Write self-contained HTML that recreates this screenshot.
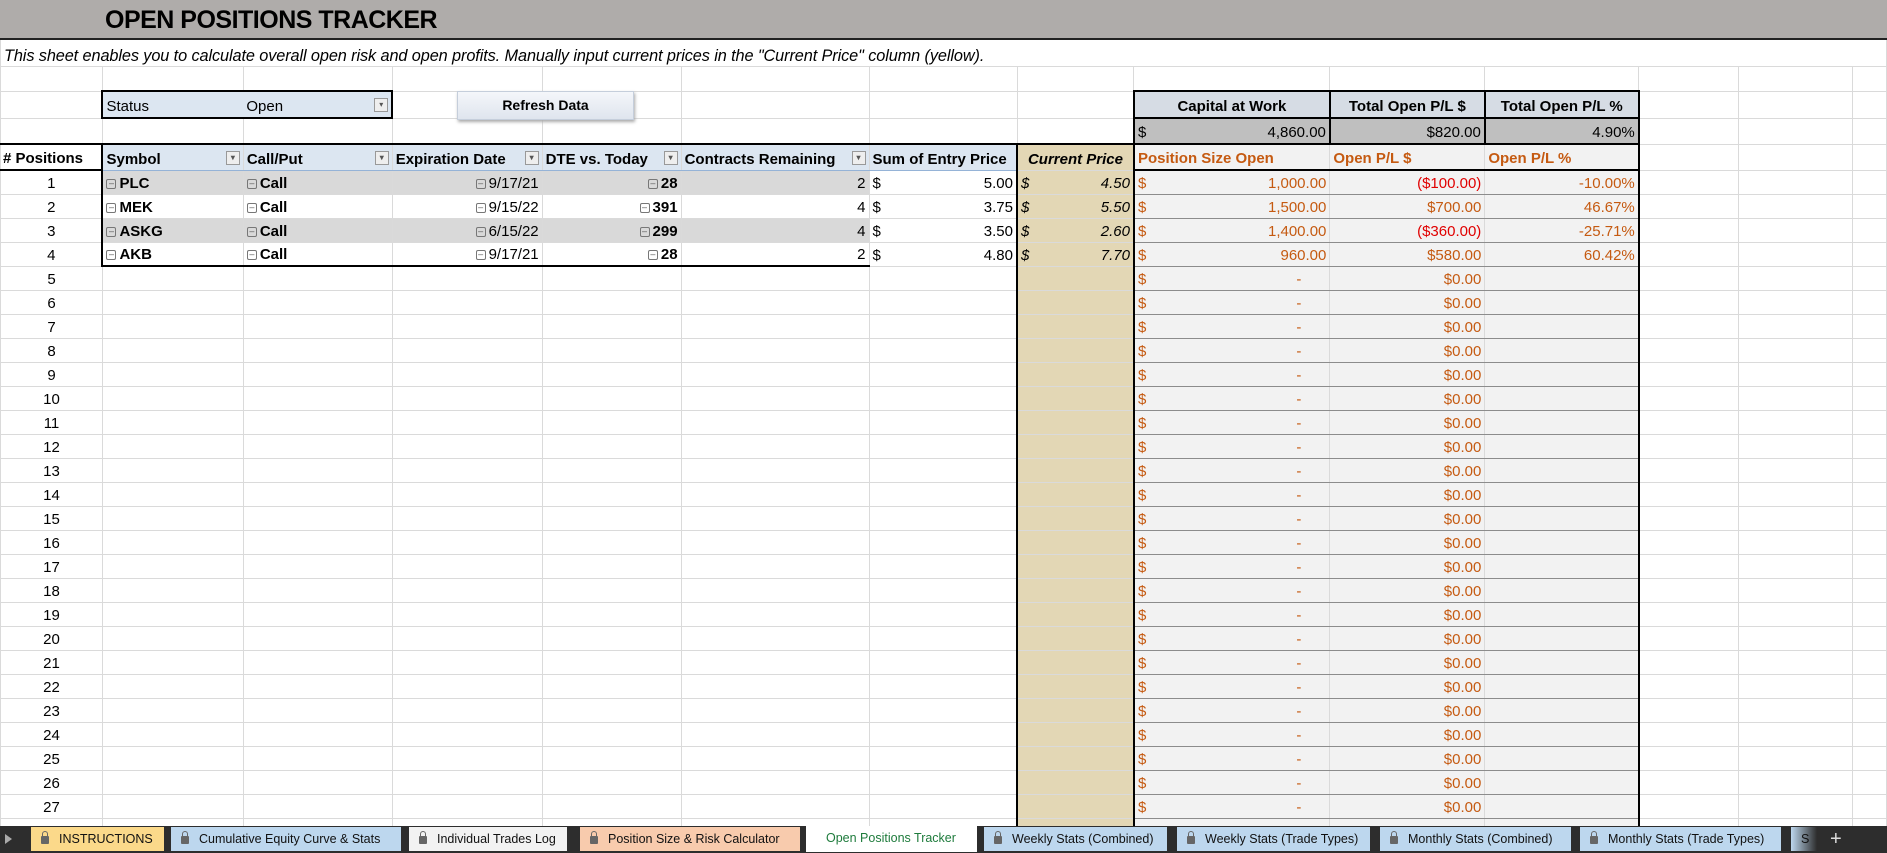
<!DOCTYPE html>
<html><head><meta charset="utf-8"><style>
*{box-sizing:border-box;margin:0;padding:0}
body{width:1887px;height:853px;overflow:hidden;background:#fff;font-family:"Liberation Sans",Arial,sans-serif;font-size:15px;color:#000;position:relative}
table{border-collapse:collapse;table-layout:fixed;position:absolute;left:0;top:0}
td{border:1px solid #dadada;height:24px;padding:0 3px;white-space:nowrap;overflow:hidden;font-size:15px;line-height:20px;vertical-align:bottom}
.c{text-align:center}.r{text-align:right}.b{font-weight:bold}
.hb{background:#dce6f1;font-weight:bold}
.g{background:#d9d9d9}
.tan{background:#e3d7b5;border-left:2px solid #000;border-right:2px solid #000}
.rt{background:#f2f2f2;color:#c55a11;border-bottom:1px solid #8c8c8c}
.rl{border-left:2px solid #000}.rr{border-right:2px solid #000}
.d span{float:left}.d{text-align:right}
.dash{padding-right:28px}
.red{color:#e00000}
.m{display:inline-block;width:10px;height:10px;border:1px solid #777;border-radius:2px;font-size:9px;line-height:7px;text-align:center;color:#555;margin-right:3px;vertical-align:2px;font-weight:normal}
.f{position:absolute;right:3px;top:6px;width:14px;height:14px;border:1px solid #999;background:#eee;font-size:8px;line-height:12px;text-align:center;color:#555}
.tabs{position:absolute;left:0;top:826px;width:1887px;height:27px;background:#2d2d2d}
.tab{position:absolute;top:1px;height:24px;font-size:12.5px;line-height:24px;padding-left:10px;color:#111;white-space:nowrap;overflow:hidden}
.lk{display:inline-block;width:8px;height:8px;background:#666;border-radius:1px;margin-right:10px;position:relative;vertical-align:-1px}
.lk:before{content:"";position:absolute;left:1px;top:-5px;width:4px;height:5px;border:1px solid #666;border-bottom:none;border-radius:3px 3px 0 0}
</style></head><body>
<div style="position:absolute;left:0;top:0;width:1887px;height:40px;background:#afacaa;border-bottom:2px solid #222"></div>
<div style="position:absolute;left:105px;top:6px;font-size:25px;font-weight:bold;letter-spacing:-0.5px">OPEN POSITIONS TRACKER</div>
<table style="top:40px">
<colgroup><col style="width:102px"><col style="width:141px"><col style="width:149px"><col style="width:150px"><col style="width:139px"><col style="width:188px"><col style="width:148px"><col style="width:117px"><col style="width:196px"><col style="width:155px"><col style="width:154px"><col style="width:100px"><col style="width:114px"><col style="width:34px"></colgroup>
<tr style="height:26px"><td colspan="14" style="font-style:italic;font-size:16.3px;border-top:none;letter-spacing:-0.1px">This sheet enables you to calculate overall open risk and open profits. Manually input current prices in the "Current Price" column (yellow).</td></tr>
<tr style="height:25px"><td></td><td></td><td></td><td></td><td></td><td></td><td></td><td></td><td></td><td></td><td></td><td></td><td></td><td></td></tr>
<tr style="height:27px"><td></td><td style="background:#dce6f1;border:2px solid #000;border-right:none">Status</td><td style="background:#dce6f1;border:2px solid #000;border-left:none;position:relative">Open<span class="f">▾</span></td><td></td><td></td><td></td><td></td><td></td>
<td class="c b" style="background:#d6dce4;border:2px solid #000">Capital at Work</td><td class="c b" style="background:#d6dce4;border:2px solid #000">Total Open P/L $</td><td class="c b" style="background:#d6dce4;border:2px solid #000">Total Open P/L %</td><td></td><td></td><td></td></tr>
<tr style="height:26px"><td></td><td></td><td></td><td></td><td></td><td></td><td></td><td></td>
<td class="d" style="background:#bfbfbf;border:2px solid #000"><span>$</span>4,860.00</td><td class="r" style="background:#bfbfbf;border:2px solid #000">$820.00</td><td class="r" style="background:#bfbfbf;border:2px solid #000">4.90%</td><td></td><td></td><td></td></tr>
<tr style="height:26px"><td class="b" style="border-bottom:2px solid #000;border-top:2px solid #000;padding-left:2px">#&nbsp;Positions</td>
<td class="hb" style="position:relative;border-top:2px solid #000;border-left:2px solid #000;border-bottom:1px solid #95b3d7">Symbol<span class="f">▾</span></td>
<td class="hb" style="position:relative;border-top:2px solid #000;border-bottom:1px solid #95b3d7">Call/Put<span class="f">▾</span></td>
<td class="hb" style="position:relative;border-top:2px solid #000;border-bottom:1px solid #95b3d7">Expiration Date<span class="f">▾</span></td>
<td class="hb" style="position:relative;border-top:2px solid #000;border-bottom:1px solid #95b3d7">DTE vs. Today<span class="f">▾</span></td>
<td class="hb" style="position:relative;border-top:2px solid #000;border-bottom:1px solid #95b3d7">Contracts Remaining<span class="f">▾</span></td>
<td class="hb" style="border-top:2px solid #000;border-bottom:1px solid #95b3d7">Sum of Entry Price</td>
<td class="tan c b" style="font-style:italic;border-top:2px solid #000">Current Price</td>
<td class="b rl" style="background:#f2f2f2;color:#c55a11;border-bottom:2px solid #000;border-top:2px solid #000">Position Size Open</td><td class="b" style="background:#f2f2f2;color:#c55a11;border-bottom:2px solid #000;border-top:2px solid #000">Open P/L $</td><td class="b rr" style="background:#f2f2f2;color:#c55a11;border-bottom:2px solid #000;border-top:2px solid #000">Open P/L %</td><td></td><td></td><td></td></tr>
<tr><td class="c">1</td><td class="g b" style="border-left:2px solid #000"><span class="m">–</span>PLC</td><td class="g b"><span class="m">–</span>Call</td><td class="g r"><span class="m">–</span>9/17/21</td><td class="g r b"><span class="m">–</span>28</td><td class="g r">2</td><td class="d"><span>$</span>5.00</td><td class="tan d" style="font-style:italic"><span>$</span>4.50</td><td class="rt d rl"><span>$</span>1,000.00</td><td class="rt r red">($100.00)</td><td class="rt r rr">-10.00%</td><td></td><td></td><td></td></tr>
<tr><td class="c">2</td><td class="b" style="border-left:2px solid #000"><span class="m">–</span>MEK</td><td class="b"><span class="m">–</span>Call</td><td class="r"><span class="m">–</span>9/15/22</td><td class="r b"><span class="m">–</span>391</td><td class="r">4</td><td class="d"><span>$</span>3.75</td><td class="tan d" style="font-style:italic"><span>$</span>5.50</td><td class="rt d rl"><span>$</span>1,500.00</td><td class="rt r">$700.00</td><td class="rt r rr">46.67%</td><td></td><td></td><td></td></tr>
<tr><td class="c">3</td><td class="g b" style="border-left:2px solid #000"><span class="m">–</span>ASKG</td><td class="g b"><span class="m">–</span>Call</td><td class="g r"><span class="m">–</span>6/15/22</td><td class="g r b"><span class="m">–</span>299</td><td class="g r">4</td><td class="d"><span>$</span>3.50</td><td class="tan d" style="font-style:italic"><span>$</span>2.60</td><td class="rt d rl"><span>$</span>1,400.00</td><td class="rt r red">($360.00)</td><td class="rt r rr">-25.71%</td><td></td><td></td><td></td></tr>
<tr><td class="c">4</td><td class="b" style="border-left:2px solid #000;border-bottom:2px solid #000"><span class="m">–</span>AKB</td><td class="b" style="border-bottom:2px solid #000"><span class="m">–</span>Call</td><td class="r" style="border-bottom:2px solid #000"><span class="m">–</span>9/17/21</td><td class="r b" style="border-bottom:2px solid #000"><span class="m">–</span>28</td><td class="r" style="border-bottom:2px solid #000">2</td><td class="d"><span>$</span>4.80</td><td class="tan d" style="font-style:italic"><span>$</span>7.70</td><td class="rt d rl"><span>$</span>960.00</td><td class="rt r">$580.00</td><td class="rt r rr">60.42%</td><td></td><td></td><td></td></tr>
<tr><td class="c">5</td><td></td><td></td><td></td><td></td><td></td><td></td><td class="tan"></td><td class="rt d rl dash"><span>$</span>-</td><td class="rt r">$0.00</td><td class="rt rr"></td><td></td><td></td><td></td></tr>
<tr><td class="c">6</td><td></td><td></td><td></td><td></td><td></td><td></td><td class="tan"></td><td class="rt d rl dash"><span>$</span>-</td><td class="rt r">$0.00</td><td class="rt rr"></td><td></td><td></td><td></td></tr>
<tr><td class="c">7</td><td></td><td></td><td></td><td></td><td></td><td></td><td class="tan"></td><td class="rt d rl dash"><span>$</span>-</td><td class="rt r">$0.00</td><td class="rt rr"></td><td></td><td></td><td></td></tr>
<tr><td class="c">8</td><td></td><td></td><td></td><td></td><td></td><td></td><td class="tan"></td><td class="rt d rl dash"><span>$</span>-</td><td class="rt r">$0.00</td><td class="rt rr"></td><td></td><td></td><td></td></tr>
<tr><td class="c">9</td><td></td><td></td><td></td><td></td><td></td><td></td><td class="tan"></td><td class="rt d rl dash"><span>$</span>-</td><td class="rt r">$0.00</td><td class="rt rr"></td><td></td><td></td><td></td></tr>
<tr><td class="c">10</td><td></td><td></td><td></td><td></td><td></td><td></td><td class="tan"></td><td class="rt d rl dash"><span>$</span>-</td><td class="rt r">$0.00</td><td class="rt rr"></td><td></td><td></td><td></td></tr>
<tr><td class="c">11</td><td></td><td></td><td></td><td></td><td></td><td></td><td class="tan"></td><td class="rt d rl dash"><span>$</span>-</td><td class="rt r">$0.00</td><td class="rt rr"></td><td></td><td></td><td></td></tr>
<tr><td class="c">12</td><td></td><td></td><td></td><td></td><td></td><td></td><td class="tan"></td><td class="rt d rl dash"><span>$</span>-</td><td class="rt r">$0.00</td><td class="rt rr"></td><td></td><td></td><td></td></tr>
<tr><td class="c">13</td><td></td><td></td><td></td><td></td><td></td><td></td><td class="tan"></td><td class="rt d rl dash"><span>$</span>-</td><td class="rt r">$0.00</td><td class="rt rr"></td><td></td><td></td><td></td></tr>
<tr><td class="c">14</td><td></td><td></td><td></td><td></td><td></td><td></td><td class="tan"></td><td class="rt d rl dash"><span>$</span>-</td><td class="rt r">$0.00</td><td class="rt rr"></td><td></td><td></td><td></td></tr>
<tr><td class="c">15</td><td></td><td></td><td></td><td></td><td></td><td></td><td class="tan"></td><td class="rt d rl dash"><span>$</span>-</td><td class="rt r">$0.00</td><td class="rt rr"></td><td></td><td></td><td></td></tr>
<tr><td class="c">16</td><td></td><td></td><td></td><td></td><td></td><td></td><td class="tan"></td><td class="rt d rl dash"><span>$</span>-</td><td class="rt r">$0.00</td><td class="rt rr"></td><td></td><td></td><td></td></tr>
<tr><td class="c">17</td><td></td><td></td><td></td><td></td><td></td><td></td><td class="tan"></td><td class="rt d rl dash"><span>$</span>-</td><td class="rt r">$0.00</td><td class="rt rr"></td><td></td><td></td><td></td></tr>
<tr><td class="c">18</td><td></td><td></td><td></td><td></td><td></td><td></td><td class="tan"></td><td class="rt d rl dash"><span>$</span>-</td><td class="rt r">$0.00</td><td class="rt rr"></td><td></td><td></td><td></td></tr>
<tr><td class="c">19</td><td></td><td></td><td></td><td></td><td></td><td></td><td class="tan"></td><td class="rt d rl dash"><span>$</span>-</td><td class="rt r">$0.00</td><td class="rt rr"></td><td></td><td></td><td></td></tr>
<tr><td class="c">20</td><td></td><td></td><td></td><td></td><td></td><td></td><td class="tan"></td><td class="rt d rl dash"><span>$</span>-</td><td class="rt r">$0.00</td><td class="rt rr"></td><td></td><td></td><td></td></tr>
<tr><td class="c">21</td><td></td><td></td><td></td><td></td><td></td><td></td><td class="tan"></td><td class="rt d rl dash"><span>$</span>-</td><td class="rt r">$0.00</td><td class="rt rr"></td><td></td><td></td><td></td></tr>
<tr><td class="c">22</td><td></td><td></td><td></td><td></td><td></td><td></td><td class="tan"></td><td class="rt d rl dash"><span>$</span>-</td><td class="rt r">$0.00</td><td class="rt rr"></td><td></td><td></td><td></td></tr>
<tr><td class="c">23</td><td></td><td></td><td></td><td></td><td></td><td></td><td class="tan"></td><td class="rt d rl dash"><span>$</span>-</td><td class="rt r">$0.00</td><td class="rt rr"></td><td></td><td></td><td></td></tr>
<tr><td class="c">24</td><td></td><td></td><td></td><td></td><td></td><td></td><td class="tan"></td><td class="rt d rl dash"><span>$</span>-</td><td class="rt r">$0.00</td><td class="rt rr"></td><td></td><td></td><td></td></tr>
<tr><td class="c">25</td><td></td><td></td><td></td><td></td><td></td><td></td><td class="tan"></td><td class="rt d rl dash"><span>$</span>-</td><td class="rt r">$0.00</td><td class="rt rr"></td><td></td><td></td><td></td></tr>
<tr><td class="c">26</td><td></td><td></td><td></td><td></td><td></td><td></td><td class="tan"></td><td class="rt d rl dash"><span>$</span>-</td><td class="rt r">$0.00</td><td class="rt rr"></td><td></td><td></td><td></td></tr>
<tr><td class="c">27</td><td></td><td></td><td></td><td></td><td></td><td></td><td class="tan"></td><td class="rt d rl dash"><span>$</span>-</td><td class="rt r">$0.00</td><td class="rt rr"></td><td></td><td></td><td></td></tr>
<tr><td></td><td></td><td></td><td></td><td></td><td></td><td></td><td class="tan"></td><td class="rt rl"></td><td class="rt"></td><td class="rt rr"></td><td></td><td></td><td></td></tr>
</table>
<div style="position:absolute;left:457px;top:91px;width:177px;height:29px;background:linear-gradient(#f4f6fa,#dfe5ee);border:1px solid #c5cedb;box-shadow:1px 2px 3px #aaa;text-align:center;font-weight:bold;font-size:14px;line-height:27px">Refresh Data</div>
<div class="tabs">
<div style="position:absolute;left:5px;top:8px;width:0;height:0;border-left:7px solid #aaa;border-top:5px solid transparent;border-bottom:5px solid transparent"></div>
<div class="tab" style="left:31px;width:133px;background:#fbd98a"><span class="lk"></span>INSTRUCTIONS</div>
<div class="tab" style="left:171px;width:230px;background:#bdd7ee"><span class="lk"></span>Cumulative Equity Curve &amp; Stats</div>
<div class="tab" style="left:409px;width:158px;background:#f2f2f2"><span class="lk"></span>Individual Trades Log</div>
<div class="tab" style="left:580px;width:220px;background:#f8cbad"><span class="lk"></span>Position Size &amp; Risk Calculator</div>
<div class="tab" style="left:806px;width:171px;background:#fff;color:#1e7b3c;top:0;height:26px;padding-left:20px">Open Positions Tracker</div>
<div class="tab" style="left:984px;width:183px;background:#bdd7ee"><span class="lk"></span>Weekly Stats (Combined)</div>
<div class="tab" style="left:1177px;width:193px;background:#bdd7ee"><span class="lk"></span>Weekly Stats (Trade Types)</div>
<div class="tab" style="left:1380px;width:191px;background:#bdd7ee"><span class="lk"></span>Monthly Stats (Combined)</div>
<div class="tab" style="left:1580px;width:201px;background:#bdd7ee"><span class="lk"></span>Monthly Stats (Trade Types)</div>
<div class="tab" style="left:1791px;width:26px;background:linear-gradient(90deg,#bdd7ee,#2d2d2d)">S</div>
<div style="position:absolute;left:1830px;top:0;color:#ddd;font-size:20px;line-height:26px">+</div>
</div>
</body></html>
